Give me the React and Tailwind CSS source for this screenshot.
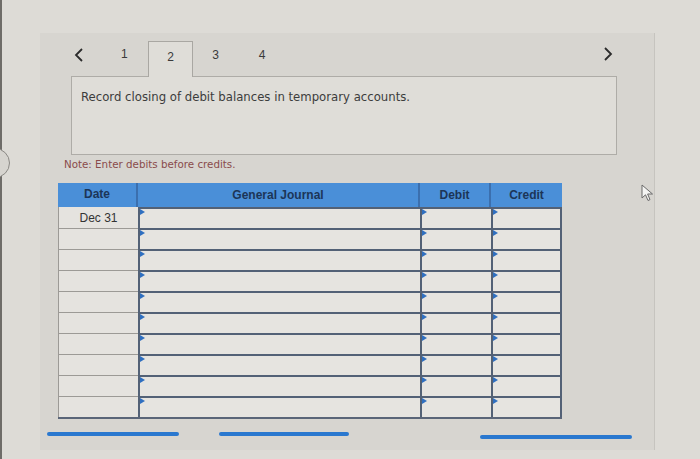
import React from "react";

const Tri = () => (
  <span className="absolute left-0 top-0 w-0 h-0 border-t-[3px] border-b-[3px] border-l-[5px] border-t-transparent border-b-transparent border-l-[#2f6fc0]" />
);

export default function App() {
  const rows = Array.from({ length: 10 }, (_, i) => i);
  return (
    <div className="relative w-[700px] h-[459px] overflow-hidden bg-[#dddbd6]" style={{ fontFamily: "'Liberation Sans', Arial, sans-serif" }}>
      {/* left edge artefacts */}
      <div className="absolute left-0 top-0 w-[2px] h-full bg-[#6e6c68]" />
      <div className="absolute left-[-20px] top-[148px] w-[30px] h-[30px] rounded-full border border-[#8a8884] bg-[#d6d4cf]" />

      <div className="flex pt-[33px] pl-[40px]">
        <div className="w-[615px] h-[417px] bg-[#d7d5d0] border-r border-[#c6c4bf] flex flex-col">
          {/* tabs */}
          <div className="flex items-end h-[43px] pl-[31px] pr-[40px]">
            <div className="flex items-center h-[36px] w-[40px] pl-[2px]">
              <svg width="12" height="16" viewBox="0 0 12 16" className="mb-[6px]">
                <path d="M9 2 L3 8 L9 14" fill="none" stroke="#2b2b2b" strokeWidth="1.8" />
              </svg>
            </div>
            <div className="flex items-center h-[36px] w-[37px] pl-[10px] text-[12px] text-[#3a3a3a] pb-[8px]">1</div>
            <div className="flex items-center justify-center h-[36px] w-[45px] text-[12px] text-[#3a3a3a] pb-[6px] bg-[#dfddd8] border-t border-l border-r border-[#a9a7a2] relative z-10 mb-[-1px]">2</div>
            <div className="flex items-center justify-center h-[36px] w-[45px] text-[12px] text-[#3a3a3a] pb-[6px]">3</div>
            <div className="flex items-center justify-center h-[36px] w-[48px] text-[12px] text-[#3a3a3a] pb-[6px]">4</div>
            <div className="flex-1" />
            <div className="flex items-center h-[36px] pb-[8px]">
              <svg width="12" height="16" viewBox="0 0 12 16">
                <path d="M3 2 L9 8 L3 14" fill="none" stroke="#2b2b2b" strokeWidth="1.8" />
              </svg>
            </div>
          </div>
          {/* content box */}
          <div className="ml-[31px] w-[546px] h-[79px] bg-[#dfddd8] border border-[#aeaca7] pl-[9px] pt-[12px]">
            <p className="text-[11.7px] text-[#3c3c3c]" style={{ fontFamily: "'DejaVu Sans', Verdana, sans-serif" }}>
              Record closing of debit balances in temporary accounts.
            </p>
          </div>
          <p className="ml-[24px] mt-[2px] text-[10.3px] text-[#8a4b4b]" style={{ fontFamily: "'DejaVu Sans', Verdana, sans-serif" }}>
            Note: Enter debits before credits.
          </p>
          {/* table */}
          <div className="ml-[18px] mt-[11px] w-[504px]">
            <div className="grid grid-cols-[80px_282px_71px_71px] h-[24px] bg-[#4a8fd8] text-[12px] font-bold text-[#1c3557]">
              <div className="flex items-center justify-center border-r-2 border-[#3b6fae] pb-[2px]">Date</div>
              <div className="flex items-center justify-center border-r-2 border-[#3b6fae]">General Journal</div>
              <div className="flex items-center justify-center border-r-2 border-[#3b6fae]">Debit</div>
              <div className="flex items-center justify-center">Credit</div>
            </div>
            <div className="border-b-2 border-[#5a6578]">
              {rows.map((i) => (
                <div key={i} className="grid grid-cols-[80px_282px_71px_71px] h-[21px]">
                  <div className={`flex items-center justify-center bg-[#e5e3df] border-l border-[#9c9a96] text-[12px] text-[#333] ${i === 0 ? "" : "border-t border-[#9c9a96]"}`}>
                    {i === 0 ? "Dec 31" : ""}
                  </div>
                  <div className="relative bg-[#e6e4e0] border-l-2 border-t-2 border-[#536176]"><Tri /></div>
                  <div className="relative bg-[#e6e4e0] border-l-2 border-t-2 border-[#536176]"><Tri /></div>
                  <div className="relative bg-[#e6e4e0] border-l-2 border-t-2 border-r-2 border-[#536176]"><Tri /></div>
                </div>
              ))}
            </div>
          </div>
          {/* bottom bars */}
          <div className="flex mt-[13px] pl-[7px]">
            <div className="w-[132px] h-[4px] bg-[#2a78cf] rounded-sm" />
            <div className="w-[130px] h-[4px] bg-[#2a78cf] rounded-sm ml-[40px]" />
            <div className="w-[152px] h-[4px] bg-[#2a78cf] rounded-sm ml-[131px] mt-[3px]" />
          </div>
        </div>
      </div>

      {/* cursor */}
      <svg className="absolute left-[641px] top-[184px]" width="14" height="18" viewBox="0 0 14 18">
        <path d="M1 1 L1 14 L4.5 10.8 L7 16.5 L9 15.6 L6.6 10 L11.5 10 Z" fill="#f4f4f2" stroke="#6a6a6a" strokeWidth="1" />
      </svg>
    </div>
  );
}
